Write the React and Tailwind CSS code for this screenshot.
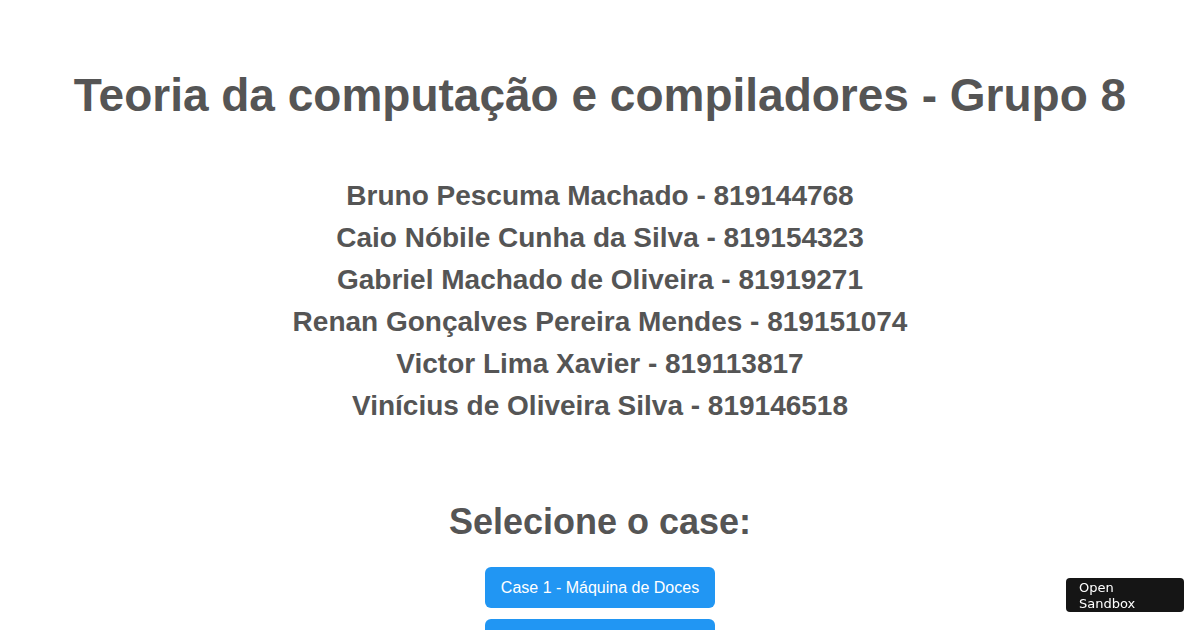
import React from "react";

const members = [
  "Bruno Pescuma Machado - 819144768",
  "Caio Nóbile Cunha da Silva - 819154323",
  "Gabriel Machado de Oliveira - 81919271",
  "Renan Gonçalves Pereira Mendes - 819151074",
  "Victor Lima Xavier - 819113817",
  "Vinícius de Oliveira Silva - 819146518",
];

const cases = ["Case 1 - Máquina de Doces", "Case 2 - Semáforo"];

export default function App() {
  return (
    <div className="min-h-screen bg-white text-[#555555] font-['Liberation_Sans',Arial,sans-serif] text-center overflow-hidden h-[630px]">
      <h1 className="pt-[69px] text-[46px] leading-[53px] font-bold">
        Teoria da computação e compiladores - Grupo 8
      </h1>

      <div className="mt-[53px] flex flex-col">
        {members.map((m) => (
          <h2 key={m} className="text-[28px] leading-[42px] font-bold">
            {m}
          </h2>
        ))}
      </div>

      <h2 className="mt-[68px] text-[36px] leading-[54px] font-bold">
        Selecione o case:
      </h2>

      <div className="mt-[18px] flex flex-col items-center gap-[11px]">
        {cases.map((c) => (
          <button
            key={c}
            className="w-[230px] h-[41px] rounded-[6px] bg-[#2196f3] text-white text-[16px] font-['Liberation_Sans',Arial,sans-serif]"
          >
            {c}
          </button>
        ))}
      </div>

      <a className="fixed left-[1066px] top-[578px] w-[118px] h-[34px] rounded-[4px] bg-[#151515] text-white text-[13px] leading-[16px] text-left pl-[13px] pr-[40px] pt-[2px] font-['DejaVu_Sans',sans-serif]">
        Open Sandbox
      </a>
    </div>
  );
}
